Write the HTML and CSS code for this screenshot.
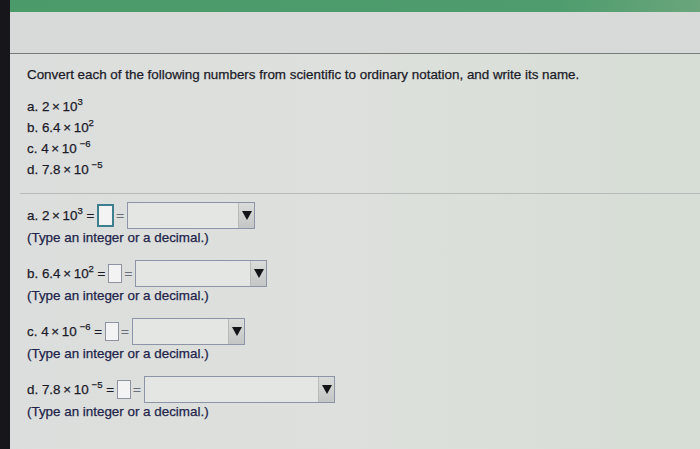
FILE: index.html
```html
<!DOCTYPE html>
<html lang="en">
<head>
    <meta charset="UTF-8">
    <title>Scientific Notation</title>
    <link rel="stylesheet" href="styles.css">
</head>
<body>

<div class="edge"></div>

<div class="main">
    <div class="topbar"></div>
    <div class="header"></div>

    <div class="question">
        <p class="title">Convert each of the following numbers from scientific to ordinary notation, and write its name.</p>
        <ol class="items">
            <li>a. 2&#8201;&times;&#8201;10<sup>3</sup></li>
            <li>b. 6.4&#8201;&times;&#8201;10<sup>2</sup></li>
            <li>c. 4&#8201;&times;&#8201;10<sup class="neg">&minus;6</sup></li>
            <li>d. 7.8&#8201;&times;&#8201;10<sup class="neg">&minus;5</sup></li>
        </ol>
    </div>

    <div class="divider"></div>

    <div class="answers">
        <div class="answer">
            <div class="row">
                <span>a. 2&#8201;&times;&#8201;10<sup>3</sup> =</span>
                <input class="box focus" type="text">
                <span class="eq">=</span>
                <div class="select" style="width: 126px"><span class="arrow"></span></div>
            </div>
            <div class="hint">(Type an integer or a decimal.)</div>
        </div>

        <div class="answer">
            <div class="row">
                <span>b. 6.4&#8201;&times;&#8201;10<sup>2</sup> =</span>
                <input class="box" type="text">
                <span class="eq">=</span>
                <div class="select" style="width: 130px"><span class="arrow"></span></div>
            </div>
            <div class="hint">(Type an integer or a decimal.)</div>
        </div>

        <div class="answer">
            <div class="row">
                <span>c. 4&#8201;&times;&#8201;10<sup class="neg">&minus;6</sup> =</span>
                <input class="box" type="text">
                <span class="eq">=</span>
                <div class="select" style="width: 111px"><span class="arrow"></span></div>
            </div>
            <div class="hint">(Type an integer or a decimal.)</div>
        </div>

        <div class="answer">
            <div class="row">
                <span>d. 7.8&#8201;&times;&#8201;10<sup class="neg">&minus;5</sup> =</span>
                <input class="box" type="text">
                <span class="eq">=</span>
                <div class="select" style="width: 189px"><span class="arrow"></span></div>
            </div>
            <div class="hint">(Type an integer or a decimal.)</div>
        </div>
    </div>
</div>

</body>
</html>
```

FILE: styles.css
```css
body {
    margin: 0;
    height: 449px;
    overflow: hidden;
    display: flex;
    font-family: "Liberation Sans", Arial, sans-serif;
    font-size: 13.4px;
    color: #1b1b28;
    -webkit-text-stroke: 0.25px;
    background: linear-gradient(90deg, #dcdedd 0%, #dde0dc 50%, #d6ded5 100%);
}

/* dark bezel on the left */
.edge {
    width: 10px;
    background-color: #17171b;
}

.main {
    flex: 1;
    display: flex;
    flex-direction: column;
}

.topbar {
    height: 12px;
    background: linear-gradient(90deg, #4b9a6a, #4f9d6e 80%, #6aa57c);
}

.header {
    height: 41px;
    background-color: #d8dad9;
    border-bottom: 1px solid #777b7a;
}

.question {
    padding: 11px 0 0 17px;
}

.title {
    margin: 0;
    line-height: 20px;
}

.items {
    list-style: none;
    margin: 11px 0 0;
    padding: 0;
}

.items li {
    line-height: 21px;
}

sup {
    font-size: 9.5px;
    vertical-align: 6px;
    line-height: 0;
}

sup.neg {
    margin-left: 3px;
}

.divider {
    margin: 13px 0 0 10px;
    border-top: 1px solid #b6bab8;
}

.answers {
    padding: 8px 0 0 17px;
}

.answer {
    margin-bottom: 13px;
}

.row {
    display: flex;
    align-items: center;
    height: 27px;
}

.box {
    width: 12px;
    height: 17px;
    margin: 0 2px 0 3px;
    padding: 0;
    border: 1px solid #8e93a2;
    background-color: #f2f3f2;
}

.box.focus {
    width: 13px;
    height: 19px;
    border: 2px solid #3d7f8c;
}

.eq {
    color: #6a6f7c;
    margin-right: 3px;
}

.select {
    height: 25px;
    border: 1px solid #8d94a8;
    background-color: #e4e6e4;
    display: flex;
    justify-content: flex-end;
}

.arrow {
    width: 15px;
    background: linear-gradient(#dadcda, #c3c6c4);
    border-left: 1px solid #b8bbb9;
    position: relative;
}

.arrow:before {
    content: "";
    position: absolute;
    left: 3px;
    top: 8px;
    border-left: 5px solid transparent;
    border-right: 5px solid transparent;
    border-top: 9px solid #141418;
}

.hint {
    line-height: 18px;
    color: #22244a;
}
```
